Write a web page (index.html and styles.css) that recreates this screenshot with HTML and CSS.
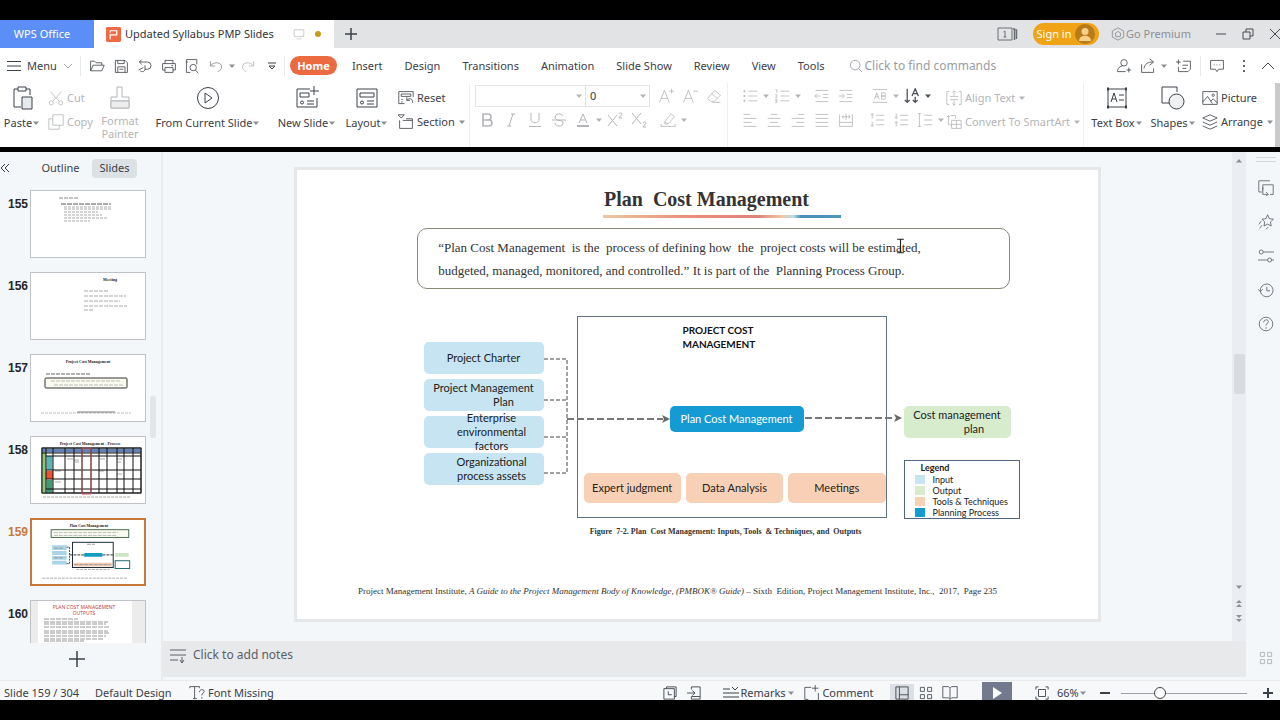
FILE: index.html
```html
<!DOCTYPE html>
<html lang="en">
<head>
<meta charset="utf-8">
<title>Updated Syllabus PMP Slides - WPS Office</title>
<link rel="stylesheet" href="styles.css">
</head>
<body>
<svg class="sprite" aria-hidden="true">
  <symbol id="caret" viewBox="0 0 8 8"><path d="M1 2.500h6L4 6z" fill="currentColor" stroke="none"/></symbol>
  <symbol id="bullets" viewBox="0 0 20 20"><path d="M8 4h11M8 10h11M8 16h11"/><path d="M2 4h2M2 10h2M2 16h2" stroke-width="2.4"/></symbol>
  <symbol id="numbers" viewBox="0 0 20 20"><path d="M8 4h11M8 10h11M8 16h11M2 2h1.500v4M1.500 8.500h2v3h-2M1.500 14h2v4h-2M1.500 16h2"/></symbol>
  <symbol id="grid4" viewBox="0 0 20 20"><path d="M3 3h5v5H3zM12 3h5v5h-5zM3 12h5v5H3zM12 12h5v5h-5z"/></symbol>
</svg>
<div class="app">
  <header class="titlebar">
    <button class="wps-home">WPS Office</button>
    <div class="doc-tab">
      <svg class="doc-logo" viewBox="0 0 16 16"><rect width="16" height="16" rx="1.500" fill="#ee6a45" stroke="none"/><path d="M4.500 13V8.500h7V4h-7v2" stroke="#fff" stroke-width="1.300"/></svg>
      <span class="doc-name">Updated Syllabus PMP Slides</span>
      <svg class="i12 faint" viewBox="0 0 20 20"><path d="M2 3h16v11H2zM6 18h8"/></svg>
      <span class="dot"></span>
    </div>
    <button class="new-tab" aria-label="New tab"><svg class="i12" viewBox="0 0 12 12"><path d="M6 0v12M0 6h12" stroke-width="1.500"/></svg></button>
    <div class="title-right">
      <button class="win-list" aria-label="Window list"><svg viewBox="0 0 22 16"><path d="M2 2h14v12H2zM9 5v6M7.500 6L9 5M7.500 11h3"/><path d="M17 3h1.500v11M19.500 4h1v9" stroke-width="1.500"/></svg></button>
      <button class="signin">Sign in<svg viewBox="0 0 20 20"><circle cx="10" cy="10" r="10" fill="#b87b1b" stroke="none"/><circle cx="10" cy="7.500" r="3.500" fill="#f7cf86" stroke="none"/><path d="M4 17c0-7 12-7 12 0" fill="#f7cf86" stroke="none"/></svg></button>
      <button class="premium"><svg class="i14" viewBox="0 0 16 16"><path d="M8 1l6.500 3.500v7L8 15l-6.500-3.500v-7zM5 7l3-2 3 2-.5 4h-5z"/></svg>Go Premium</button>
      <button class="win" aria-label="Minimize"><svg class="i12" viewBox="0 0 12 12"><path d="M1 6h10"/></svg></button>
      <button class="win" aria-label="Restore"><svg class="i12" viewBox="0 0 12 12"><path d="M1 4h7v7H1zM4 4V1h7v7H8"/></svg></button>
      <button class="win" aria-label="Close"><svg class="i12" viewBox="0 0 12 12"><path d="M1 1l10 10M11 1L1 11"/></svg></button>
    </div>
  </header>

  <nav class="menubar">
    <button class="menu-btn"><svg class="i14" viewBox="0 0 14 14"><path d="M0 2.500h14M0 7h14M0 11.500h14"/></svg>Menu<svg class="i10 faint" viewBox="0 0 10 10"><path d="M1 3l4 4 4-4"/></svg></button>
    <div class="quick">
      <button aria-label="Open"><svg class="i16" viewBox="0 0 20 20"><path d="M2 16V4h5l2 2h7v3M2 16L5 9h14l-3 7z"/></svg></button>
      <button aria-label="Save"><svg class="i16" viewBox="0 0 20 20"><path d="M3 3h12l3 3v12H3zM6 3v4h8V3M6 18v-7h9v7M8 14h5"/></svg></button>
      <button aria-label="Export"><svg class="i16" viewBox="0 0 20 20"><path d="M3 5h10a4.500 4.500 0 010 9h-3M6 2L3 5l3 3M10 9v5c0 3-4 4-6 2M2 15l6-3"/></svg></button>
      <button aria-label="Print"><svg class="i16" viewBox="0 0 20 20"><path d="M5 7V3h10v4M5 15H2V7h16v8h-3M5 12h10v6H5zM13 9.500h2"/></svg></button>
      <button aria-label="Print preview"><svg class="i16" viewBox="0 0 20 20"><path d="M8 18H3V2h13v6M14 15l4 4M3 5h2"/><circle cx="11.500" cy="12" r="4"/></svg></button>
      <button class="mid" aria-label="Undo"><svg class="i16" viewBox="0 0 20 20"><path d="M3 4v6h6M3 10c4-6 14-5 14 1 0 3-2 5-5 6"/></svg></button>
      <button class="tiny" aria-label="Undo list"><svg class="i8"><use href="#caret"/></svg></button>
      <button class="pale" aria-label="Redo"><svg class="i16" viewBox="0 0 20 20"><path d="M17 4v6h-6M17 10C13 4 3 5 3 11c0 3 2 5 5 6"/></svg></button>
      <button aria-label="Customize"><svg class="i10" viewBox="0 0 10 10"><path d="M1 2h8M2 5h6L5 8z"/></svg></button>
    </div>
    <div class="tabs">
      <button class="active">Home</button><button>Insert</button><button>Design</button><button>Transitions</button><button>Animation</button><button>Slide Show</button><button>Review</button><button>View</button><button>Tools</button>
    </div>
    <label class="search"><svg class="i14" viewBox="0 0 16 16"><circle cx="7" cy="7" r="5.500"/><path d="M11 11l4 4"/></svg><input type="text" placeholder="Click to find commands" aria-label="Find commands"></label>
    <div class="menu-right">
      <button aria-label="Collaborate"><svg class="i16" viewBox="0 0 20 20"><circle cx="10" cy="6" r="4"/><path d="M8 10c-5 1-6 4-6 7h10M16 12v6M13 15h6"/></svg></button>
      <button aria-label="Share"><svg class="i16" viewBox="0 0 20 20"><path d="M2 8v10h15v-5M5 13c1-6 5-8 11-8M12 1l5 4-5 4"/></svg></button>
      <button class="tiny" aria-label="Share options"><svg class="i8"><use href="#caret"/></svg></button>
      <button class="wide" aria-label="Task list"><svg class="i16" viewBox="0 0 20 20"><path d="M9 4h9v10l-3 3H3v-6M8 9h7M8 13h5M3 2v6M0 5h6"/></svg></button>
      <button class="wide rule" aria-label="Feedback"><svg class="i16" viewBox="0 0 20 20"><path d="M2 3h16v11h-6l-2 3-2-3H2zM6 8.500h1M9.500 8.500h1M13 8.500h1"/></svg></button>
      <button aria-label="More"><svg class="i16" viewBox="0 0 16 16"><path d="M8 2v2M8 7v2M8 12v2" stroke-width="1.600"/></svg></button>
      <button aria-label="Collapse ribbon"><svg class="i14" viewBox="0 0 14 14"><path d="M1 10l6-6 6 6"/></svg></button>
    </div>
  </nav>

  <section class="ribbon" aria-label="Home tools">
    <button class="big g-paste"><svg viewBox="0 0 24 24"><path d="M8 3H4v18h7M16 3h4v6M8 1h8v4H8z"/><path d="M12 11h10v12H12z" fill="#e6e9ee"/></svg><span>Paste<svg class="i8"><use href="#caret"/></svg></span></button>
    <div class="stack g-cut pale">
      <button><svg class="i16" viewBox="0 0 20 20"><circle cx="4" cy="16" r="2.500"/><circle cx="16" cy="16" r="2.500"/><path d="M3 2l11 12M17 2L6 14"/></svg>Cut</button>
      <button><svg class="i16" viewBox="0 0 20 20"><path d="M6 1h13v13H6zM6 6H1v13h13v-5"/></svg>Copy</button>
    </div>
    <button class="big g-painter pale"><svg viewBox="0 0 24 24"><path d="M9 11V1h5v10h7v11H3V11zM3 15h18"/><path d="M3 15h18v7H3z" fill="#eee"/></svg><span>Format<br>Painter</span></button>
    <button class="big g-play"><svg viewBox="0 0 24 24"><circle cx="12" cy="12" r="10.500"/><path d="M9 7l7 5-7 5z"/></svg><span>From Current Slide<svg class="i8"><use href="#caret"/></svg></span></button>
    <button class="big g-new"><svg viewBox="0 0 24 24"><path d="M15 3H2v18h20V12M19 0v9M15 5h9M5 7h9v4H5zM12 15h7M12 18h7"/><circle cx="7" cy="16.500" r="1.500"/></svg><span>New Slide<svg class="i8"><use href="#caret"/></svg></span></button>
    <button class="big g-layout"><svg viewBox="0 0 24 24"><path d="M2 3h20v18H2zM5 7h14v4H5zM12 15h7M12 18h7"/><circle cx="7" cy="16.500" r="1.500"/></svg><span>Layout<svg class="i8"><use href="#caret"/></svg></span></button>
    <div class="stack g-section">
      <button><svg class="i16" viewBox="0 0 20 20"><path d="M8 17H1V2h18v7M4 5h12v3H4zM4 12h2M4 15h2M11 13c3-4 8-2 7 3M11 9v4h4"/></svg>Reset</button>
      <button><svg class="i16" viewBox="0 0 20 20"><path d="M0 1h8L4 5zM2 8v10h16V6h-8M6 8h12"/></svg>Section<svg class="i8"><use href="#caret"/></svg></button>
    </div>
    <div class="rows g-font pale">
      <div class="row">
        <label class="field name"><input type="text" aria-label="Font name"><svg class="i8"><use href="#caret"/></svg></label>
        <label class="field size"><select aria-label="Font size"><option>0</option></select><svg class="i8"><use href="#caret"/></svg></label>
        <button class="slot first" aria-label="Grow font"><svg class="i16" viewBox="0 0 20 20"><path d="M2 18L8 3l6 15M4 13h8M17 1v6M14 4h6"/></svg></button>
        <button class="slot" aria-label="Shrink font"><svg class="i16" viewBox="0 0 20 20"><path d="M2 18L8 3l6 15M4 13h8M14 4h6"/></svg></button>
        <button class="slot" aria-label="Clear format"><svg class="i16" viewBox="0 0 20 20"><path d="M11 3l7 6-8 8H6l-4-4zM7 7l7 6M8 18h10"/></svg></button>
      </div>
      <div class="row">
        <button class="slot" aria-label="Bold"><svg class="i14" viewBox="0 0 14 14"><path d="M3 1h5a3 3 0 010 6H3zM3 7h6a3 3 0 010 6H3z" stroke-width="1.600"/></svg></button>
        <button class="slot" aria-label="Italic"><svg class="i14" viewBox="0 0 14 14"><path d="M7 1h4M9 1L5 13M3 13h4"/></svg></button>
        <button class="slot" aria-label="Underline"><svg class="i14" viewBox="0 0 14 14"><path d="M3 0v6c0 5 8 5 8 0V0M1 13.500h12"/></svg></button>
        <button class="slot" aria-label="Strikethrough"><svg class="i14" viewBox="0 0 14 14"><path d="M11 3c-1-3-8-3-8 1 0 5 8 2 8 6 0 4-8 4-8 0M0 7h14"/></svg></button>
        <button class="slot" aria-label="Font colour"><svg class="i14" viewBox="0 0 14 14"><path d="M3 10l4-9 4 9M4.500 7h5"/><path d="M1 13h12" stroke-width="2"/></svg></button><svg class="i8"><use href="#caret"/></svg>
        <button class="slot" aria-label="Superscript"><svg class="i16" viewBox="0 0 16 16"><path d="M1 3l9 11M10 3L1 14M12 2c1-2 3-1 3 0s-3 3-3 4h3"/></svg></button>
        <button class="slot" aria-label="Subscript"><svg class="i16" viewBox="0 0 16 16"><path d="M1 1l9 11M10 1L1 12M12 11c1-2 3-1 3 0s-3 3-3 4h3"/></svg></button>
        <button class="slot hl" aria-label="Highlight"><svg class="i16" viewBox="0 0 20 20"><path d="M6 12l8-10 4 4-8 9H6zM6 12l4 3M2 15l-1 3h18v-3"/></svg></button><svg class="i8"><use href="#caret"/></svg>
      </div>
    </div>
    <div class="rows g-para pale">
      <div class="row">
        <button class="slot" aria-label="Bullets"><svg class="i16"><use href="#bullets"/></svg></button><svg class="i8"><use href="#caret"/></svg>
        <button class="slot" aria-label="Numbering"><svg class="i16"><use href="#numbers"/></svg></button><svg class="i8"><use href="#caret"/></svg>
        <button class="slot indent" aria-label="Decrease indent"><svg class="i16" viewBox="0 0 20 20"><path d="M2 3h16M11 8h7M11 12h7M2 17h16M1 10h7M4 7l-3 3 3 3"/></svg></button>
        <button class="slot" aria-label="Increase indent"><svg class="i16" viewBox="0 0 20 20"><path d="M2 3h16M11 8h7M11 12h7M2 17h16M1 10h7M5 7l3 3-3 3"/></svg></button>
        <button class="slot direction" aria-label="Character spacing"><svg class="i16" viewBox="0 0 20 20"><path d="M1 2h18M1 18h18M3 14l3-8 3 8M4 11h4M12 6v8h3a2 2 0 000-4h-3 3a2 2 0 000-4z"/></svg></button><svg class="i8"><use href="#caret"/></svg>
        <button class="slot dark" aria-label="Text direction"><svg class="i16" viewBox="0 0 20 20"><path d="M4 1v17M1 15l3 3 3-3M10 10l4-9 4 9M12 7h4M14 11v7M11 15l3 3 3-3" stroke-width="1.600"/></svg></button><svg class="i8 dark"><use href="#caret"/></svg>
      </div>
      <div class="row">
        <button class="slot" aria-label="Align left"><svg class="i16" viewBox="0 0 20 20"><path d="M2 3h8M2 8h16M2 13h10M2 18h16"/></svg></button>
        <button class="slot" aria-label="Align centre"><svg class="i16" viewBox="0 0 20 20"><path d="M6 3h8M2 8h16M5 13h10M2 18h16"/></svg></button>
        <button class="slot" aria-label="Align right"><svg class="i16" viewBox="0 0 20 20"><path d="M10 3h8M2 8h16M8 13h10M2 18h16"/></svg></button>
        <button class="slot" aria-label="Justify"><svg class="i16" viewBox="0 0 20 20"><path d="M2 3h16M2 8h16M2 13h16M2 18h16"/></svg></button>
        <button class="slot" aria-label="Distribute"><svg class="i16" viewBox="0 0 20 20"><path d="M2 3v15h16V3M2 13h16M5 6h10M7 4L5 6l2 2M13 4l2 2-2 2M10 2v8"/></svg></button>
        <button class="slot spacing" aria-label="Space before"><svg class="i16" viewBox="0 0 20 20"><path d="M9 4h10M9 10h10M9 16h10M4 2v6M2 4l2-2 2 2M4 12v6M2 16l2 2 2-2"/></svg></button>
        <button class="slot" aria-label="Space after"><svg class="i16" viewBox="0 0 20 20"><path d="M9 4h10M9 10h10M9 16h10M4 2v6M2 6l2 2 2-2M4 12v6M2 14l2-2 2 2"/></svg></button>
        <button class="slot" aria-label="Line spacing"><svg class="i16" viewBox="0 0 20 20"><path d="M9 4h10M9 10h10M9 16h10M3 2v16M1 2h4M1 18h4"/></svg></button><svg class="i8"><use href="#caret"/></svg>
      </div>
    </div>
    <div class="stack g-align pale">
      <button><svg class="i16" viewBox="0 0 20 20"><path d="M4 2H1v16h3M16 2h3v16h-3M5 8h10M5 12h10M10 1v6M8 3l2-2 2 2M10 13v6M8 17l2 2 2-2"/></svg>Align Text<svg class="i8"><use href="#caret"/></svg></button>
      <button><svg class="i16" viewBox="0 0 20 20"><path d="M3 14V2M1 4l2-2 2 2M6 2h6v4M7 8h12v10H7zM7 13h12M13 8v10M4 12l3 3"/></svg>Convert To SmartArt<svg class="i8"><use href="#caret"/></svg></button>
    </div>
    <button class="big g-text"><svg viewBox="0 0 24 24"><path d="M3 3h18v18H3zM6 16l3-9 3 9M7 13h4M14 9h5M14 14h5"/><path d="M2 3h2M20 3h2M2 21h2M20 21h2" stroke-width="3"/></svg><span>Text Box<svg class="i8"><use href="#caret"/></svg></span></button>
    <button class="big g-shapes"><svg viewBox="0 0 24 24"><path d="M9 17H1V1h15v5"/><circle cx="15.500" cy="15.500" r="7.500" fill="#eef0f2"/></svg><span>Shapes<svg class="i8"><use href="#caret"/></svg></span></button>
    <div class="stack g-picture">
      <button><svg class="i16" viewBox="0 0 20 20"><path d="M1 2h18v16H1zM1 15l6-7 6 9M11 14l3-3 5 5"/><circle cx="14" cy="6.500" r="1.500"/></svg>Picture</button>
      <button><svg class="i16" viewBox="0 0 20 20"><path d="M10 1l9 4-9 4-9-4zM1 10l9 4 9-4M1 15l9 4 9-4"/></svg>Arrange<svg class="i8"><use href="#caret"/></svg></button>
    </div>
    <div class="ribbon-end"></div>
  </section>

  <main class="workspace">
    <aside class="panel">
      <div class="panel-tabs">
        <button class="collapse" aria-label="Collapse panel"><svg class="i10" viewBox="0 0 10 10"><path d="M5 1L1 5l4 4M9 1L5 5l4 4"/></svg></button>
        <button>Outline</button><button class="active">Slides</button>
      </div>
      <div class="thumb-wrap">
        <ol class="thumbs">
          <li><span>155</span><svg viewBox="0 0 114 66"><path d="M28 7h20" stroke="#888" stroke-dasharray="4 1"/><path d="M30 13h50" stroke="#555" stroke-dasharray="5 1"/><path d="M33 16h47M33 18h47M33 21h34M33 24h38M33 27h43M33 30h26" stroke="#aaa" stroke-dasharray="3 1"/></svg></li>
          <li><span>156</span><svg viewBox="0 0 114 66"><text x="72" y="8" class="t-title">Meeting</text><path d="M53 18h25M53 23h42M53 28h36M53 33h43M53 37h9" stroke="#aaa" stroke-dasharray="4 1"/></svg></li>
          <li><span>157</span><svg viewBox="0 0 114 66"><text x="57" y="8" class="t-title mid-text">Project Cost Management</text><path d="M15 19h45" stroke="#666" stroke-dasharray="4 1"/><rect x="14" y="23" width="82" height="10" rx="1" fill="#fbfbef" stroke="#333"/><path d="M20 26h70M23 30h69" stroke="#bbb" stroke-dasharray="4 1"/><path d="M10 58h90" stroke="#bbb" stroke-dasharray="3 1"/><path d="M46 57h38" stroke="#777"/></svg></li>
          <li><span>158</span><svg viewBox="0 0 114 66"><text x="59" y="8" class="t-title mid-text">Project Cost Management - Process</text><rect x="11" y="11" width="99" height="45" fill="#fff"/><path d="M11 13.500h99" stroke="#6681b4" stroke-width="4"/><path d="M13 15v41" stroke="#8dc67b" stroke-width="4"/><path d="M18.500 19v14" stroke="#55b6b3" stroke-width="6"/><path d="M18.500 34v8" stroke="#ed5330" stroke-width="7"/><path d="M18.500 43v13" stroke="#3d9b72" stroke-width="6"/><path d="M36 22h6M43 23h5M44 25h4M68 22h6M85 22h6M86 25h4M24 34h6M68 34h5M24 45h6M86 37h5" stroke="#aaa"/><path d="M11 11h99v45H11zM15 11v45M22 11v45M34 11v45M43 11v45M51 11v45M60 11v45M68 11v45M76 11v45M86 11v45M93 11v45M102 11v45M11 16h99M15 19h95M15 33h95M15 42h95M15 52h95" stroke="#111"/><path d="M51 11h9v46h-9z" stroke="#c75257"/><path d="M12 60h88" stroke="#aaa" stroke-dasharray="3 1"/></svg></li>
          <li class="current"><span>159</span><svg viewBox="0 0 114 66"><text x="58" y="7" class="t-title mid-text">Plan Cost Management</text><rect x="19" y="10" width="80" height="8" fill="#f9fbf0" stroke="#456a48"/><path d="M22 13h66M22 16h65" stroke="#bbb" stroke-dasharray="4 1"/><path class="flat" d="M20 26h15v5H20zM20 32h15v4H20zM20 37h15v4H20zM20 42h15v4H20z" fill="#a7d4e6"/><path d="M35 28h3v17h-3" stroke="#444" stroke-dasharray="2 1"/><rect x="41" y="23" width="42" height="26" fill="#fff" stroke="#1a2733"/><path d="M38 36h16M72 36h12" stroke="#333" stroke-dasharray="3 1"/><rect class="flat" x="53" y="34" width="19" height="4" rx="1" fill="#159bc0"/><path class="flat" d="M42 44h40v4H42z" fill="#f2c9b1"/><path d="M43 46h37M22 29h10M22 39h10M56 25h8" stroke="#999" stroke-dasharray="4 1"/><path class="flat" d="M85 34h14v4H85z" fill="#cee5c6"/><rect x="85" y="42" width="15" height="8" fill="#fff" stroke="#236875"/><path d="M45 51h34M10 60h88" stroke="#aaa" stroke-dasharray="3 1"/></svg></li>
          <li><span>160</span><svg viewBox="0 0 114 66"><rect class="flat" width="114" height="66" fill="#ececed"/><path class="flat" d="M7 0h94v66H7z" fill="#fff"/><text x="53" y="8" class="t-red mid-text">PLAN COST MANAGEMENT</text><text x="53" y="14" class="t-red mid-text">OUTPUTS</text><path d="M13 18h34M13 21h64M13 23h62M13 26h66M13 30h64M13 32h66M13 35h62M13 38h60M13 40h40" stroke="#999" stroke-dasharray="5 1"/></svg></li>
        </ol>
        <div class="thumb-scroll"></div>
      </div>
      <button class="add-slide" aria-label="Add slide"><svg class="i16" viewBox="0 0 16 16"><path d="M8 0v16M0 8h16" stroke-width="1.500"/></svg></button>
    </aside>

    <div class="center">
      <div class="stage-row">
        <div class="stage">
          <article class="slide">
            <h1>Plan&nbsp; Cost Management</h1>
            <div class="rainbow"></div>
            <div class="quote">
              <p>“Plan Cost Management &nbsp;is the &nbsp;process of defining how &nbsp;the &nbsp;project costs will be estimated,</p>
              <p>budgeted, managed, monitored, and controlled.” It is part of the &nbsp;Planning Process Group.</p>
              <svg class="ibeam" viewBox="0 0 8 14"><path d="M1 1h2.500L4 2l.5-1H7M4 2v10M1 13h2.500l.5-1 .5 1H7"/></svg>
            </div>
            <div class="diagram">
              <div class="area"><h2>PROJECT COST<br>MANAGEMENT</h2></div>
              <svg class="wires" viewBox="0 0 596 204">
                <path d="M120 43h23v114h-23M120 84h23M120 121h23" stroke="#444" stroke-dasharray="4 2"/>
                <path d="M143 103h96M381 102h90" stroke="#777" stroke-width="2" stroke-dasharray="7 3"/>
                <path d="M246 103l-8-4 2 4-2 4zM478 102l-8-4 2 4-2 4z" fill="#666" stroke="none"/>
              </svg>
              <div class="node in n1">Project Charter</div>
              <div class="node in n2"><span>Project Management</span><span class="shift">Plan</span></div>
              <div class="node in n3">Enterprise<br>environmental<br>factors</div>
              <div class="node in n4">Organizational<br>process assets</div>
              <div class="node plan">Plan Cost Management</div>
              <div class="tools"><div class="node">Expert judgment</div><div class="node">Data Analysis</div><div class="node">Meetings</div></div>
              <div class="node out"><span>Cost management</span><span class="shift-out">plan</span></div>
              <div class="legend">
                <h3>Legend</h3>
                <ul><li><i class="c-in"></i>Input</li><li><i class="c-out"></i>Output</li><li><i class="c-tool"></i>Tools &amp; Techniques</li><li><i class="c-plan"></i>Planning Process</li></ul>
              </div>
            </div>
            <p class="caption">Figure &nbsp;7-2. Plan &nbsp;Cost Management: Inputs, Tools &nbsp;&amp; Techniques, and &nbsp;Outputs</p>
            <p class="source">Project Management Institute, <em>A Guide to the Project Management Body of Knowledge, (PMBOK® Guide)</em> – Sixth&nbsp; Edition, Project Management Institute, Inc., &nbsp;2017, &nbsp;Page 235</p>
          </article>
        </div>
        <div class="vscroll">
          <svg class="i8" viewBox="0 0 8 8"><path d="M1 5.500h6L4 2z" fill="currentColor" stroke="none"/></svg>
          <div class="vthumb"></div>
          <svg class="i8"><use href="#caret"/></svg>
          <svg class="i8" viewBox="0 0 8 8"><path d="M1 4l3-3 3 3zM1 8l3-3 3 3z" fill="currentColor" stroke="none"/></svg>
          <svg class="i8" viewBox="0 0 8 8"><path d="M1 0l3 3 3-3zM1 4l3 3 3-3z" fill="currentColor" stroke="none"/></svg>
        </div>
      </div>
      <label class="notes"><svg class="i16" viewBox="0 0 16 16"><path d="M0 3h16M0 8h16M0 13h8M12 10v6M10 13l2 3 2-3"/></svg><input type="text" placeholder="Click to add notes" aria-label="Notes"></label>
    </div>

    <aside class="side">
      <div class="grip"></div>
      <button aria-label="Slide design"><svg class="i16" viewBox="0 0 20 20"><path d="M5 15H1V1h14M6 13V6h13v12h-4M6 9v9h6M10 15l3 3-3 2"/></svg></button>
      <button aria-label="Animation pane"><svg class="i16" viewBox="0 0 20 20"><path d="M12 1l2.200 4.800 5 .7-3.600 3.500.9 5L12 12.600 7.500 15l.9-5L5 6.500l5-.7zM4 9l-3 4M5 14l-3 4M13 16l-3 3"/></svg></button>
      <button aria-label="Properties"><svg class="i16" viewBox="0 0 20 20"><circle cx="4" cy="5" r="2.500"/><path d="M6.500 5H20M0 15h12M17 15h3"/><circle cx="14.500" cy="15" r="2.500"/></svg></button>
      <button aria-label="History"><svg class="i16" viewBox="0 0 20 20"><path d="M3 12a8 8 0 102-7 8 8 0 00-2 7M0 9l3 3 3-3M11 6v5h4"/></svg></button>
      <button aria-label="Help"><svg class="i16" viewBox="0 0 20 20"><circle cx="10" cy="10" r="8.500"/><path d="M7 8c0-4 6-4 6-1 0 2-3 2-3 5M10 14v2"/></svg></button>
      <button class="apps" aria-label="Apps"><svg class="i16"><use href="#grid4"/></svg></button>
    </aside>
  </main>

  <footer class="status">
    <span class="s-count">Slide 159 / 304</span>
    <span class="s-design">Default Design</span>
    <button class="s-font"><svg class="i16" viewBox="0 0 20 20"><path d="M1 4V2h12v2M7 2v15M5 17h5M13 9c0-4 6-4 6-1 0 2-3 2-3 5M16 15v2"/></svg>Font Missing</button>
    <div class="s-right">
      <button class="slot" aria-label="Recent"><svg class="i14" viewBox="0 0 16 16"><path d="M4 3V1h11v11h-2M1 3h12v12H1zM6 6v4h4"/></svg></button>
      <button class="slot" aria-label="Send"><svg class="i14" viewBox="0 0 16 16"><path d="M5 4V1h10v14H5v-3M0 8h9M6 5l3 3-3 3M5 12h10"/></svg></button>
      <button class="s-remarks"><svg class="i16" viewBox="0 0 16 16"><path d="M0 4h7M0 8h16M0 12h16M9 2l3 3 3-3"/></svg>Remarks<svg class="i8"><use href="#caret"/></svg></button>
      <button class="s-comment"><svg class="i16" viewBox="0 0 20 20"><path d="M9 3H1v15h4l2 2h11V10M14 0v8M10 4h8"/></svg>Comment</button>
      <button class="slot on" aria-label="Normal view"><svg class="i14" viewBox="0 0 16 16"><path d="M1 1h14v14H1zM5 1v14M5 10h10"/></svg></button>
      <button class="slot" aria-label="Slide sorter"><svg class="i16"><use href="#grid4"/></svg></button>
      <button class="slot" aria-label="Reading view"><svg class="i16" viewBox="0 0 20 20"><path d="M10 4v14M10 4L8 2H1v14h7l2 2 2-2h7V2h-7z"/></svg></button>
      <button class="play" aria-label="Play slide show"><svg class="i12" viewBox="0 0 12 12"><path d="M2 0l9 6-9 6z" fill="#fff" stroke="none"/></svg></button>
      <button class="slot" aria-label="Fit"><svg class="i14" viewBox="0 0 16 16"><path d="M1 4V1h3M12 1h3v3M15 12v3h-3M4 15H1v-3M4 4h8v8H4z"/></svg></button>
      <span class="zoom">66%<svg class="i8"><use href="#caret"/></svg></span>
      <button class="slot" aria-label="Zoom out"><svg class="i10" viewBox="0 0 10 10"><path d="M0 5h10" stroke-width="2"/></svg></button>
      <input class="zoom-range" type="range" min="0" max="100" value="29" aria-label="Zoom">
      <button class="slot" aria-label="Zoom in"><svg class="i10" viewBox="0 0 10 10"><path d="M0 5h10M5 0v10" stroke-width="2"/></svg></button>
    </div>
  </footer>
</div>
</body>
</html>
```
FILE: styles.css
```css
* { box-sizing: border-box; }
body { margin: 0; background: #000; color: #3b4048; font: 11px/16px "Noto Sans", "Open Sans", sans-serif; }
button, input, select { font: inherit; color: inherit; background: none; border: 0; padding: 0; margin: 0; }
input:focus { outline: none; }
button { display: flex; align-items: center; justify-content: center; white-space: nowrap; }
h1, h2, h3, p, ul, ol { margin: 0; padding: 0; list-style: none; }
svg { fill: none; stroke: currentColor; stroke-width: 1; flex: none; }
.sprite { position: absolute; width: 0; height: 0; }
.i8 { width: 8px; height: 8px; color: #8b9097; }
.i10 { width: 10px; height: 10px; }
.i12 { width: 12px; height: 12px; }
.i14 { width: 14px; height: 14px; }
.i16 { width: 16px; height: 16px; }
.faint { color: #a9adb2; }
.pale { color: #b3b5b8; }
.pale .i8 { color: #b3b5b8; }
.mid { color: #85898f; }
.dark, .pale .dark { color: #4b5058; }

.app { display: flex; flex-direction: column; height: 100vh; padding: 20px 0; overflow: hidden; }

.titlebar { display: flex; height: 28px; background: #e2e3e5; }
.wps-home { width: 94px; padding-right: 10px; background: #5b8ef6; color: #fff; }
.doc-tab { display: flex; align-items: center; width: 240px; padding-left: 12px; background: #fff; color: #30343a; }
.doc-logo { width: 15px; height: 15px; margin-right: 4px; }
.doc-name { width: 168px; white-space: nowrap; }
.dot { width: 6px; height: 6px; margin-left: 10px; border-radius: 50%; background: #c79a22; }
.new-tab { width: 34px; }
.title-right { display: flex; align-items: center; margin-left: auto; margin-right: -8px; color: #6a6f76; }
.win-list svg { width: 22px; height: 16px; }
.signin { width: 66px; height: 22px; margin: 0 11px 0 15px; gap: 4px; border-radius: 11px; background: #f0a316; color: #fff; }
.signin svg { width: 20px; height: 20px; }
.premium { width: 82px; gap: 1px; margin-right: 15px; color: #8c9095; }
.win { width: 27px; height: 28px; color: #454a52; }

.menubar { display: flex; align-items: center; height: 35px; background: #fff; }
.menu-btn { width: 81px; height: 20px; padding-left: 7px; gap: 6px; justify-content: flex-start; border-right: 1px solid #e8e9eb; }
.quick { display: flex; width: 204px; height: 20px; padding-left: 4px; border-right: 1px solid #e8e9eb; }
.quick button, .menu-right button { width: 24px; }
.quick .tiny, .menu-right .tiny { width: 8px; }
.tabs { display: flex; align-items: center; gap: 22px; }
.tabs button { height: 19px; }
.tabs .active { width: 47px; margin: 0 -7px 0 5px; border-radius: 10px; background: #ec6a40; color: #fff; font-weight: 700; }
.search { display: flex; align-items: center; flex: 1; gap: 2px; margin-left: 24px; color: #989da3; font-size: 12px; }
.search input { width: 100%; }
input::placeholder { color: inherit; opacity: 1; }
.menu-right { display: flex; align-items: center; }
.menu-right button { height: 20px; }
.menu-right .wide { width: 32px; }
.menu-right .rule { border-left: 1px solid #e8e9eb; }

.ribbon { display: flex; height: 64px; background: #fff; overflow: hidden; }
.big { flex-direction: column; justify-content: flex-start; align-items: center; padding-top: 3px; line-height: 13px; }
.big > svg { width: 24px; height: 24px; margin-bottom: 6px; }
.big span { text-align: center; }
.g-painter svg { margin-bottom: 4px; }
.g-paste { width: 44px; }
.g-cut { width: 52px; padding-left: 4px; }
.g-painter { width: 48px; }
.g-play { width: 128px; }
.g-new { width: 70px; }
.g-layout { width: 50px; }
.g-section { width: 78px; padding-left: 6px; border-right: 1px solid #eff0f1; }
.g-font { width: 258px; padding-left: 5px; border-right: 1px solid #eff0f1; }
.g-para { width: 218px; padding-left: 10px; }
.g-align { width: 138px; border-right: 1px solid #eff0f1; }
.g-text { width: 66px; }
.g-shapes { width: 46px; }
.g-picture { padding-left: 6px; }
.stack { display: flex; flex-direction: column; padding-top: 3px; }
.stack button { height: 24px; gap: 3px; justify-content: flex-start; }
.rows { padding-top: 1px; }
.row { display: flex; align-items: center; height: 24px; }
.slot { width: 24px; height: 24px; }
.field { display: flex; align-items: center; height: 22px; padding-right: 2px; border: 1px solid #e3e4e6; color: #3b4048; }
.field + .field { border-left: 0; }
.name { width: 111px; }
.size { width: 64px; padding-left: 4px; }
.field input, .field select { flex: 1; min-width: 0; appearance: none; }
.first { margin-left: 4px; }
.hl { margin-left: 5px; }
.indent { margin-left: 8px; }
.direction { margin-left: 10px; }
.spacing { margin-left: 7px; }
.ribbon-end { width: 5px; margin-left: auto; background: #c9cacc; }

.workspace { display: flex; flex: 1; min-height: 0; margin-top: 5px; background: #f4f7f9; }
.panel { display: flex; flex-direction: column; width: 163px; border-right: 2px solid #e9ebed; }
.panel-tabs { display: flex; align-items: center; height: 32px; margin-bottom: 6px; }
.panel-tabs button { width: 45px; height: 19px; }
.panel-tabs .collapse { width: 10px; margin-right: 28px; }
.panel-tabs .active { margin-left: 9px; border-radius: 4px; background: #dce1e4; }
.thumb-wrap { display: flex; flex: 1; min-height: 0; overflow: hidden; }
.thumbs { flex: 1; display: flex; flex-direction: column; gap: 14px; }
.thumbs li { display: flex; }
.thumbs li > span { width: 30px; padding: 6px 2px 0 0; text-align: right; font: 700 12px/16px "Liberation Sans", sans-serif; color: #24272b; }
.thumbs li > svg { width: 116px; height: 68px; border: 1px solid #bfc3c7; background: #fff; }
.thumbs .current > span { color: #c77b3c; }
.thumbs .current > svg { border: 2px solid #c9783c; }
.thumbs text, .flat { stroke: none; }
.t-title { font: 700 4px "Liberation Serif", serif; fill: #222; }
.t-red { font: 5px "Noto Sans", sans-serif; fill: #bd4646; }
.mid-text { text-anchor: middle; }
.thumb-scroll { align-self: center; width: 7px; height: 42px; margin: 0 5px 0 4px; border-radius: 2px; background: #e3e6e9; }
.add-slide { width: 153px; height: 37px; padding-bottom: 6px; }

.center { display: flex; flex-direction: column; flex: 1; min-width: 0; }
.stage-row { display: flex; flex: 1; min-height: 0; }
.stage { flex: 1; padding: 18px 134px 0; overflow: hidden; }
.slide { aspect-ratio: 801 / 449; padding-top: 17px; background: #fff; box-shadow: 0 0 0 3px #e5e7e8; color: #333; font-family: "Liberation Serif", serif; }
.slide h1 { padding-left: 18px; text-align: center; font-size: 20px; line-height: 24px; white-space: nowrap; }
.rainbow { width: 238px; height: 3px; margin: 4px auto 10px; background: linear-gradient(90deg, #eac8a0, #e8907a 35%, #dd8478 65%, #f0c8a0 75%, #b9dcec 80%, #4a90b8 83%, #4d96c0); position: relative; left: 24px; }
.quote { position: relative; width: 74%; margin: 0 auto; left: 16px; padding: 7px 20px 6px; border: 1px solid #858b77; border-radius: 10px; font-size: 13px; line-height: 23px; white-space: nowrap; }
.ibeam { position: absolute; left: 478px; top: 9px; width: 9px; height: 16px; color: #222; }
.diagram { position: relative; width: 596px; height: 204px; margin: 27px auto 0; left: 24px; font: 11px/14px Lato, "Noto Sans", sans-serif; color: #222; }
.area { position: absolute; left: 153px; top: 0; width: 310px; height: 202px; padding: 6px 0 0 105px; border: 1px solid #5d7188; }
.area h2 { font-size: 10px; line-height: 14px; color: #111; }
.wires { position: absolute; left: 0; top: 0; width: 596px; height: 204px; }
.node { display: flex; flex-direction: column; align-items: center; justify-content: center; border-radius: 5px; text-align: center; white-space: nowrap; }
.in { position: absolute; left: 0; width: 120px; height: 32px; background: #c6e4f1; }
.n1 { top: 26px; }
.n2 { top: 63px; }
.n3 { top: 100px; padding-left: 16px; }
.n4 { top: 137px; padding-left: 16px; }
.shift { padding-left: 40px; }
.shift-out { padding-left: 34px; }
.plan { position: absolute; left: 246px; top: 90px; width: 134px; height: 26px; background: #159bd3; color: #fff; }
.out { position: absolute; left: 480px; top: 90px; width: 107px; height: 32px; background: #d7ebcd; }
.tools { position: absolute; left: 160px; top: 157px; display: grid; grid-template-columns: repeat(3, 1fr); gap: 5px; width: 302px; }
.tools .node { height: 30px; background: #f8d0b5; }
.legend { position: absolute; left: 480px; top: 144px; width: 116px; height: 59px; padding-left: 10px; border: 1px solid #4f6582; font-size: 9px; line-height: 11px; }
.legend h3 { padding-left: 6px; font-size: 9px; line-height: 13px; }
.legend li { display: flex; align-items: center; gap: 8px; white-space: nowrap; }
.legend i { width: 10px; height: 9px; }
.c-in { background: #c6e4f1; }
.c-out { background: #d7ebcd; }
.c-tool { background: #f8d0b5; }
.c-plan { background: #159bd3; }
.caption { margin-top: 6px; padding-left: 56px; text-align: center; font-weight: 700; font-size: 8px; line-height: 12px; white-space: nowrap; }
.source { margin-top: 47px; padding-left: 61px; font-size: 9px; line-height: 12px; white-space: nowrap; }
.vscroll { display: flex; flex-direction: column; align-items: center; gap: 8px; width: 14px; padding: 5px 0 18px; background: #eaedf1; }
.vthumb { width: 11px; height: 40px; margin: auto 0; border-radius: 2px; background: #d8dbe0; }
.notes { display: flex; align-items: center; gap: 7px; height: 36px; margin-bottom: 3px; padding: 0 0 8px 7px; background: #e8e9ea; color: #5a5f66; font-size: 12px; }
.notes input { flex: 1; }
.side { display: flex; flex-direction: column; align-items: center; width: 34px; padding-left: 6px; color: #555a61; }
.grip { width: 20px; height: 5px; margin: 5px 0 9px; border: 1px solid #d5d8da; border-width: 1px 0; }
.side button { width: 28px; height: 34px; }
.side .apps { margin-top: auto; margin-bottom: 5px; color: #a5a9ad; }

.status { display: flex; align-items: flex-start; height: 20px; padding-top: 3px; background: #f6f8fa; border-top: 1px solid #e9ebec; overflow: hidden; line-height: 18px; }
.status > *, .s-right > * { height: 18px; }
.s-count { width: 83px; padding-left: 4px; white-space: nowrap; }
.s-design { width: 106px; padding-left: 12px; white-space: nowrap; }
.s-font { gap: 3px; }
.s-right { display: flex; align-items: center; margin-left: auto; }
.s-remarks { width: 72px; margin-left: 17px; gap: 1px; }
.s-comment { width: 70px; margin: 0 16px 0 9px; gap: 2px; }
.on { background: #dcdfe5; }
.s-right .play { width: 30px; height: 22px; margin: 0 18px 0 20px; background: #737a8e; }
.zoom { display: flex; align-items: center; width: 36px; margin-left: 3px; }
.zoom-range { width: 126px; margin: 0 9px 0 4px; appearance: none; }
.zoom-range::-webkit-slider-runnable-track { height: 1px; background: #9ca1a8; }
.zoom-range::-webkit-slider-thumb { appearance: none; width: 12px; height: 12px; margin-top: -6px; border: 1px solid #444; border-radius: 50%; background: #fff; }
```
